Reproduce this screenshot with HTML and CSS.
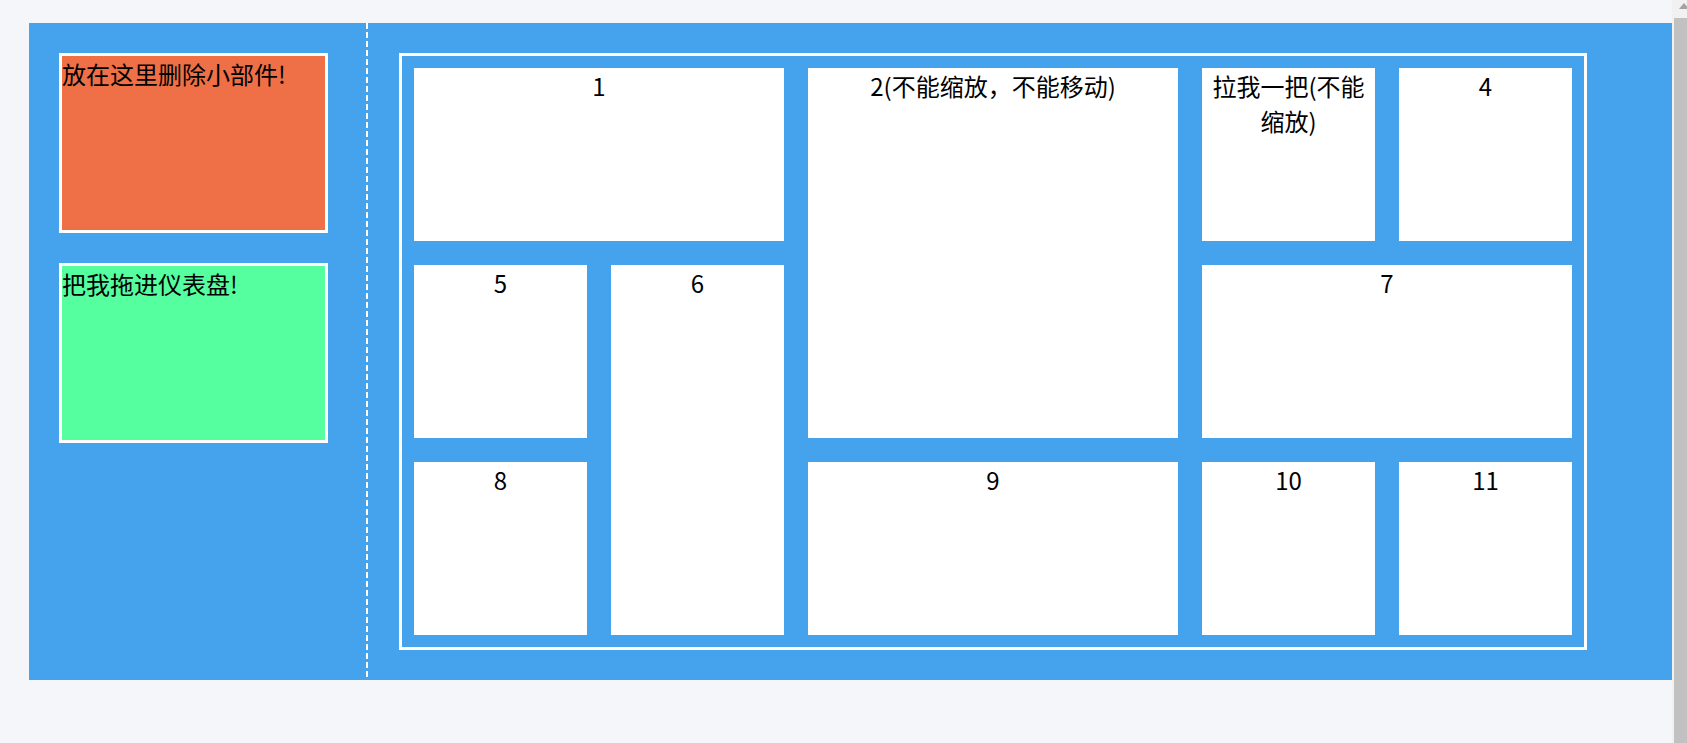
FILE: index.html
```html
<!DOCTYPE html>
<html lang="zh-CN">
<head>
<meta charset="utf-8">
<title>Dashboard</title>
<link rel="stylesheet" href="styles.css">
</head>
<body>
<div class="dashboard">
  <aside class="sidebar">
    <div class="widget widget-trash">放在这里删除小部件!</div>
    <div class="widget widget-new">把我拖进仪表盘!</div>
  </aside>
  <main class="main">
    <div class="grid-frame">
      <div class="grid">
        <div class="tile t1">1</div>
        <div class="tile t2">2(不能缩放，不能移动)</div>
        <div class="tile t3">拉我一把(不能缩放)</div>
        <div class="tile t4">4</div>
        <div class="tile t5">5</div>
        <div class="tile t6">6</div>
        <div class="tile t7">7</div>
        <div class="tile t8">8</div>
        <div class="tile t9">9</div>
        <div class="tile t10">10</div>
        <div class="tile t11">11</div>
      </div>
    </div>
  </main>
</div>
<div class="scrollbar">
  <div class="scroll-arrow"></div>
  <div class="scroll-thumb"></div>
</div>
</body>
</html>
```
FILE: styles.css
```css
html, body {
  margin: 0;
  padding: 0;
  overflow: hidden;
}
body {
  background: #f4f6fa;
  font-family: "Noto Sans CJK SC", "Noto Sans", sans-serif;
  color: #000;
  width: 1687px;
  height: 743px;
}
.dashboard {
  margin: 23px 0 0 29px;
  width: 1643px;
  height: 657px;
  background: #45a2ed;
  display: flex;
}
.sidebar {
  box-sizing: border-box;
  width: 339px;
  padding: 30px 0 0 30px;
  background-image: repeating-linear-gradient(to bottom, #fff 0, #fff 6px, transparent 6px, transparent 9px);
  background-size: 2px 100%;
  background-position: right top;
  background-repeat: no-repeat;
  display: flex;
  flex-direction: column;
  gap: 30px;
}
.widget {
  box-sizing: border-box;
  width: 269px;
  height: 180px;
  border: 3px solid #fff;
  font-size: 24px;
  line-height: 35px;
}
.widget-trash { background: #ef6f46; }
.widget-new { background: #55ff9f; }
.main {
  padding: 30px 0 0 31px;
}
.grid-frame {
  box-sizing: border-box;
  width: 1188px;
  height: 597px;
  border: 3px solid #fff;
  padding: 12px;
}
.grid {
  display: grid;
  grid-template-columns: repeat(6, 173px);
  grid-template-rows: repeat(3, 173px);
  gap: 24px;
}
.tile {
  background: #fff;
  text-align: center;
  font-size: 24px;
  line-height: 35px;
}
.t1 { grid-column: 1 / 3; grid-row: 1; }
.t2 { grid-column: 3 / 5; grid-row: 1 / 3; }
.t3 { grid-column: 5; grid-row: 1; }
.t4 { grid-column: 6; grid-row: 1; }
.t5 { grid-column: 1; grid-row: 2; }
.t6 { grid-column: 2; grid-row: 2 / 4; }
.t7 { grid-column: 5 / 7; grid-row: 2; }
.t8 { grid-column: 1; grid-row: 3; }
.t9 { grid-column: 3 / 5; grid-row: 3; }
.t10 { grid-column: 5; grid-row: 3; }
.t11 { grid-column: 6; grid-row: 3; }
.scrollbar {
  position: fixed;
  top: 0;
  right: 0;
  width: 15px;
  height: 743px;
  background: #f1f1f1;
}
.scroll-arrow {
  position: absolute;
  top: 3px;
  left: 7px;
  width: 0;
  height: 0;
  border-left: 5px solid transparent;
  border-right: 5px solid transparent;
  border-bottom: 6px solid #a3a3a3;
}
.scroll-thumb {
  position: absolute;
  top: 18px;
  left: 2px;
  right: 0;
  bottom: 0;
  background: #c1c1c1;
}
```
